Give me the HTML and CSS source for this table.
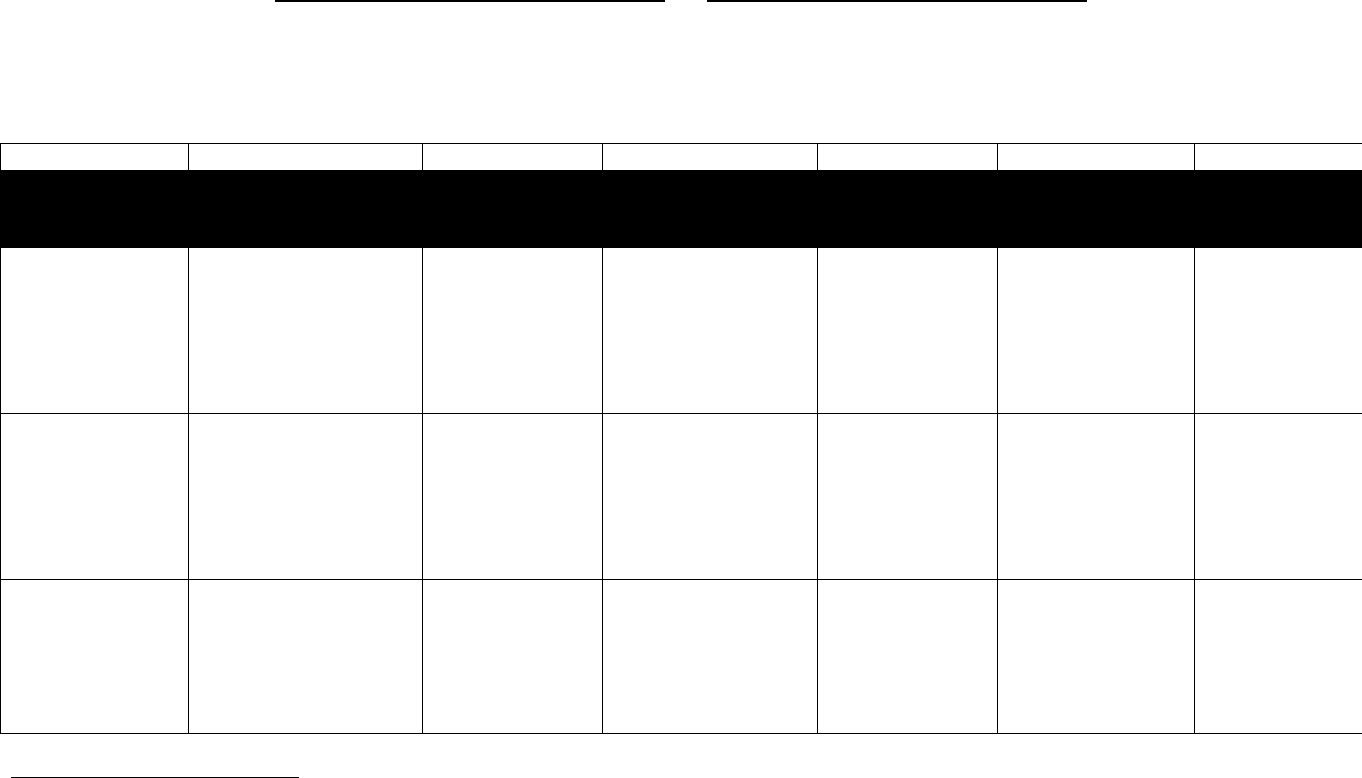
FILE: index.html
```html
<!DOCTYPE html>
<html lang="en">
<head>
<meta charset="utf-8">
<title>Form</title>
<link rel="stylesheet" href="styles.css">
</head>
<body>
<div class="page">
  <div class="fields">
    <span class="blank blank-a"></span>
    <span class="blank blank-b"></span>
  </div>
  <table class="grid">
    <colgroup>
      <col class="c1"><col class="c2"><col class="c3"><col class="c4"><col class="c5"><col class="c6"><col class="c7">
    </colgroup>
    <tr class="r-head"><td></td><td></td><td></td><td></td><td></td><td></td><td></td></tr>
    <tr class="r-band"><td></td><td></td><td></td><td></td><td></td><td></td><td></td></tr>
    <tr class="r-a"><td></td><td></td><td></td><td></td><td></td><td></td><td></td></tr>
    <tr class="r-b"><td></td><td></td><td></td><td></td><td></td><td></td><td></td></tr>
    <tr class="r-c"><td></td><td></td><td></td><td></td><td></td><td></td><td></td></tr>
  </table>
  <div class="footnote-rule"></div>
</div>
</body>
</html>
```

FILE: styles.css
```css
html, body {
  margin: 0;
  padding: 0;
  background: #fff;
  font-family: "Liberation Serif", serif;
}
.page {
  width: 1362px;
  height: 778px;
  overflow: hidden;
}
.fields {
  display: flex;
  gap: 42px;
  padding-left: 275px;
  height: 143px;
  box-sizing: border-box;
}
.blank {
  display: block;
  height: 0;
  border-bottom: 2px solid #000;
}
.blank-a { width: 390px; }
.blank-b { width: 380px; }
.grid {
  width: 1362px;
  table-layout: fixed;
  border-collapse: collapse;
}
.grid td {
  border: 1px solid #000;
  padding: 0;
}
.c1 { width: 188px; }
.c2 { width: 234px; }
.c3 { width: 180px; }
.c4 { width: 215px; }
.c5 { width: 180px; }
.c6 { width: 197px; }
.c7 { width: 168px; }
.r-head td { height: 26px; }
.r-band td { height: 76px; background: #000; }
.r-a td { height: 165px; }
.r-b td { height: 165px; }
.r-c td { height: 153px; }
.footnote-rule {
  width: 288px;
  margin-left: 11px;
  margin-top: 43px;
  border-top: 2px solid #000;
}
```
